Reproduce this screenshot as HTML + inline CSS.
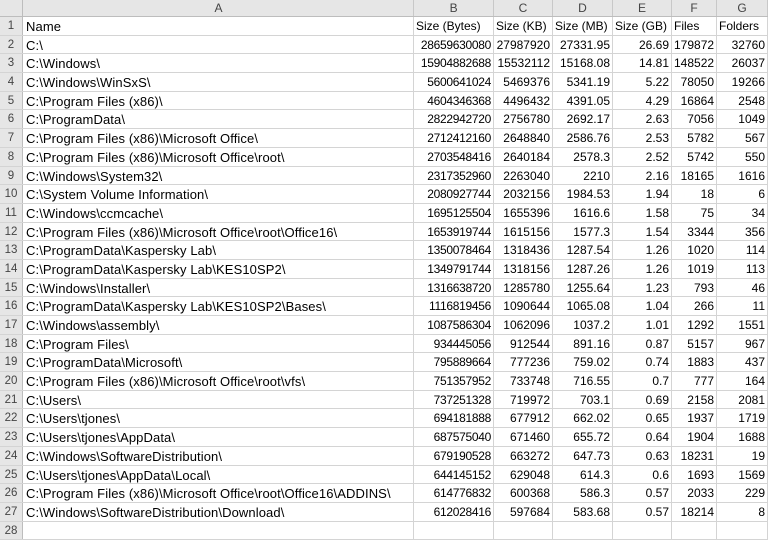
<!DOCTYPE html><html><head><style>
body{margin:0;width:768px;height:523px;overflow:hidden;background:#fff;font-family:"Liberation Sans",Arial,sans-serif;font-size:12px;color:#000}
.r{display:flex;height:18.7px;box-sizing:border-box;border-bottom:1px solid #d4d4d4;line-height:19px}
.r div{box-sizing:border-box;border-right:1px solid #d4d4d4;white-space:nowrap;overflow:hidden;padding:0 2px;text-align:right}
.r div:nth-child(1){width:23px;background:#e6e6e6;text-align:center;color:#444;border-right:1px solid #bdbdbd;font-size:11.5px}
.r div:nth-child(2){width:391px;text-align:left;padding-left:3px;font-size:13px;letter-spacing:0.1px}
.r div:nth-child(3){width:80px;letter-spacing:-0.3px}.r div:nth-child(4){width:59px}.r div:nth-child(5){width:60px}.r div:nth-child(6){width:59px}.r div:nth-child(7){width:45px}.r div:nth-child(8){width:51px}
.h{height:17px;background:#e6e6e6;border-bottom:1px solid #bdbdbd;color:#444;line-height:16px}
.h div{text-align:center!important;border-right:1px solid #c8c8c8;font-size:12px!important}
.t div{text-align:left}
</style></head><body>
<div class="r h"><div></div><div>A</div><div>B</div><div>C</div><div>D</div><div>E</div><div>F</div><div>G</div></div>
<div class="r t"><div style="text-align:center">1</div><div>Name</div><div style="letter-spacing:0">Size (Bytes)</div><div>Size (KB)</div><div>Size (MB)</div><div>Size (GB)</div><div>Files</div><div>Folders</div></div>
<div class="r"><div>2</div><div>C:\</div><div>28659630080</div><div>27987920</div><div>27331.95</div><div>26.69</div><div>179872</div><div>32760</div></div>
<div class="r"><div>3</div><div>C:\Windows\</div><div>15904882688</div><div>15532112</div><div>15168.08</div><div>14.81</div><div>148522</div><div>26037</div></div>
<div class="r"><div>4</div><div>C:\Windows\WinSxS\</div><div>5600641024</div><div>5469376</div><div>5341.19</div><div>5.22</div><div>78050</div><div>19266</div></div>
<div class="r"><div>5</div><div>C:\Program Files (x86)\</div><div>4604346368</div><div>4496432</div><div>4391.05</div><div>4.29</div><div>16864</div><div>2548</div></div>
<div class="r"><div>6</div><div>C:\ProgramData\</div><div>2822942720</div><div>2756780</div><div>2692.17</div><div>2.63</div><div>7056</div><div>1049</div></div>
<div class="r"><div>7</div><div>C:\Program Files (x86)\Microsoft Office\</div><div>2712412160</div><div>2648840</div><div>2586.76</div><div>2.53</div><div>5782</div><div>567</div></div>
<div class="r"><div>8</div><div>C:\Program Files (x86)\Microsoft Office\root\</div><div>2703548416</div><div>2640184</div><div>2578.3</div><div>2.52</div><div>5742</div><div>550</div></div>
<div class="r"><div>9</div><div>C:\Windows\System32\</div><div>2317352960</div><div>2263040</div><div>2210</div><div>2.16</div><div>18165</div><div>1616</div></div>
<div class="r"><div>10</div><div>C:\System Volume Information\</div><div>2080927744</div><div>2032156</div><div>1984.53</div><div>1.94</div><div>18</div><div>6</div></div>
<div class="r"><div>11</div><div>C:\Windows\ccmcache\</div><div>1695125504</div><div>1655396</div><div>1616.6</div><div>1.58</div><div>75</div><div>34</div></div>
<div class="r"><div>12</div><div>C:\Program Files (x86)\Microsoft Office\root\Office16\</div><div>1653919744</div><div>1615156</div><div>1577.3</div><div>1.54</div><div>3344</div><div>356</div></div>
<div class="r"><div>13</div><div>C:\ProgramData\Kaspersky Lab\</div><div>1350078464</div><div>1318436</div><div>1287.54</div><div>1.26</div><div>1020</div><div>114</div></div>
<div class="r"><div>14</div><div>C:\ProgramData\Kaspersky Lab\KES10SP2\</div><div>1349791744</div><div>1318156</div><div>1287.26</div><div>1.26</div><div>1019</div><div>113</div></div>
<div class="r"><div>15</div><div>C:\Windows\Installer\</div><div>1316638720</div><div>1285780</div><div>1255.64</div><div>1.23</div><div>793</div><div>46</div></div>
<div class="r"><div>16</div><div>C:\ProgramData\Kaspersky Lab\KES10SP2\Bases\</div><div>1116819456</div><div>1090644</div><div>1065.08</div><div>1.04</div><div>266</div><div>11</div></div>
<div class="r"><div>17</div><div>C:\Windows\assembly\</div><div>1087586304</div><div>1062096</div><div>1037.2</div><div>1.01</div><div>1292</div><div>1551</div></div>
<div class="r"><div>18</div><div>C:\Program Files\</div><div>934445056</div><div>912544</div><div>891.16</div><div>0.87</div><div>5157</div><div>967</div></div>
<div class="r"><div>19</div><div>C:\ProgramData\Microsoft\</div><div>795889664</div><div>777236</div><div>759.02</div><div>0.74</div><div>1883</div><div>437</div></div>
<div class="r"><div>20</div><div>C:\Program Files (x86)\Microsoft Office\root\vfs\</div><div>751357952</div><div>733748</div><div>716.55</div><div>0.7</div><div>777</div><div>164</div></div>
<div class="r"><div>21</div><div>C:\Users\</div><div>737251328</div><div>719972</div><div>703.1</div><div>0.69</div><div>2158</div><div>2081</div></div>
<div class="r"><div>22</div><div>C:\Users\tjones\</div><div>694181888</div><div>677912</div><div>662.02</div><div>0.65</div><div>1937</div><div>1719</div></div>
<div class="r"><div>23</div><div>C:\Users\tjones\AppData\</div><div>687575040</div><div>671460</div><div>655.72</div><div>0.64</div><div>1904</div><div>1688</div></div>
<div class="r"><div>24</div><div>C:\Windows\SoftwareDistribution\</div><div>679190528</div><div>663272</div><div>647.73</div><div>0.63</div><div>18231</div><div>19</div></div>
<div class="r"><div>25</div><div>C:\Users\tjones\AppData\Local\</div><div>644145152</div><div>629048</div><div>614.3</div><div>0.6</div><div>1693</div><div>1569</div></div>
<div class="r"><div>26</div><div>C:\Program Files (x86)\Microsoft Office\root\Office16\ADDINS\</div><div>614776832</div><div>600368</div><div>586.3</div><div>0.57</div><div>2033</div><div>229</div></div>
<div class="r"><div>27</div><div>C:\Windows\SoftwareDistribution\Download\</div><div>612028416</div><div>597684</div><div>583.68</div><div>0.57</div><div>18214</div><div>8</div></div>
<div class="r"><div>28</div><div></div><div></div><div></div><div></div><div></div><div></div><div></div></div>
</body></html>
